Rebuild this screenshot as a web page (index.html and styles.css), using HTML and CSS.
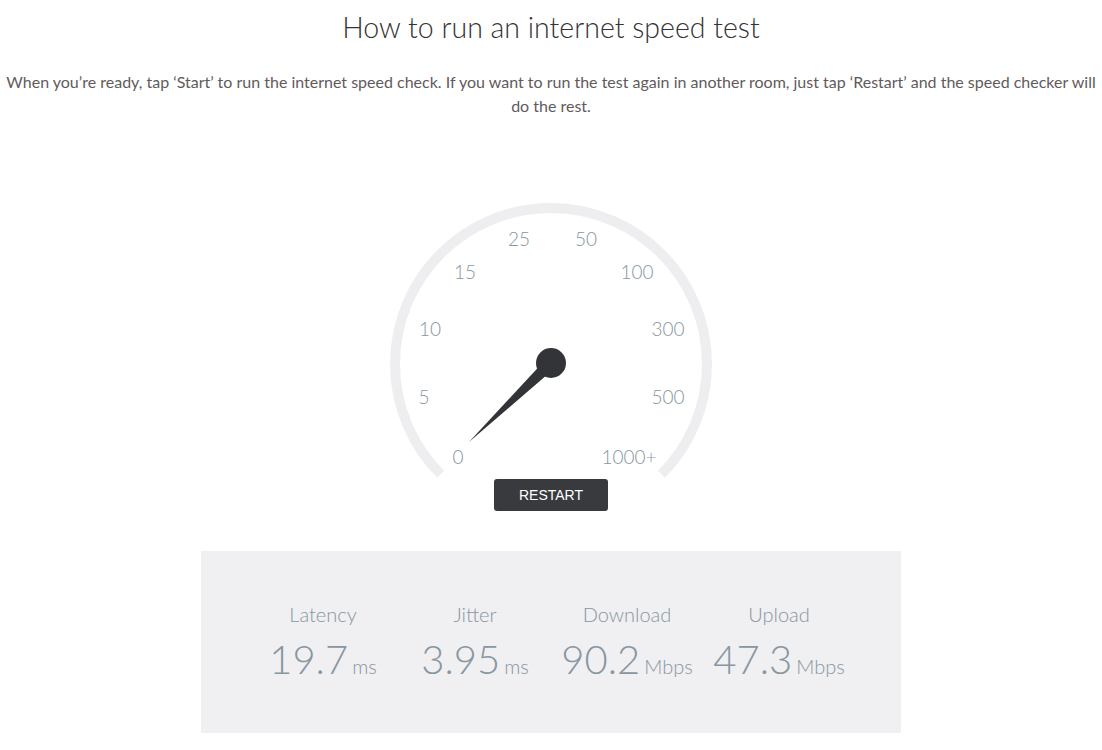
FILE: index.html
```html
<!DOCTYPE html>
<html>
<head>
<meta charset="utf-8">
<link rel="stylesheet" href="styles.css">
</head>
<body>
<section class="intro">
  <h1 class="title">How to run an internet speed test</h1>
  <p class="lead">When you’re ready, tap ‘Start’ to run the internet speed check. If you want to run the test again in another room, just tap ‘Restart’ and the speed checker will do the rest.</p>
</section>
<section class="gauge-wrap">
  <svg class="gauge" width="340" height="284" viewBox="0 0 340 284">
    <path d="M 59.7 279.3 A 156 156 0 1 1 280.3 279.3" fill="none" stroke="#eeedf0" stroke-width="10"/>
    <g class="ticks" text-anchor="middle" dominant-baseline="central">
      <text x="77" y="261">0</text>
      <text x="43" y="201">5</text>
      <text x="49" y="133">10</text>
      <text x="84" y="76">15</text>
      <text x="138" y="43">25</text>
      <text x="205" y="43">50</text>
      <text x="256" y="76">100</text>
      <text x="287" y="133">300</text>
      <text x="287" y="201">500</text>
      <text x="248" y="261">1000+</text>
    </g>
    <polygon points="174.5,172.6 165.5,163.4 88,247" fill="#333438"/>
    <circle cx="170" cy="168" r="15" fill="#333438"/>
  </svg>
  <button class="restart">RESTART</button>
</section>
<section class="results">
  <div class="stat">
    <div class="stat-label">Latency</div>
    <div class="stat-value">19.7<span class="unit">ms</span></div>
  </div>
  <div class="stat">
    <div class="stat-label">Jitter</div>
    <div class="stat-value">3.95<span class="unit">ms</span></div>
  </div>
  <div class="stat">
    <div class="stat-label">Download</div>
    <div class="stat-value">90.2<span class="unit">Mbps</span></div>
  </div>
  <div class="stat">
    <div class="stat-label">Upload</div>
    <div class="stat-value">47.3<span class="unit">Mbps</span></div>
  </div>
</section>
</body>
</html>
```

FILE: styles.css
```css
html, body {
  margin: 0;
  padding: 0;
  background: #ffffff;
}
body {
  font-family: Lato, "Liberation Sans", sans-serif;
  width: 1102px;
}
.intro {
  text-align: center;
  padding: 0 4px;
}
.title {
  margin: 0;
  padding-top: 10px;
  font-family: Lato, sans-serif;
  font-weight: 300;
  font-size: 28.5px;
  line-height: 34px;
  color: #333333;
}
.lead {
  margin: 26px 0 0;
  font-family: Lato, sans-serif;
  font-weight: 400;
  font-size: 16px;
  line-height: 24px;
  color: #5f5b5c;
}
.gauge-wrap {
  display: flex;
  flex-direction: column;
  align-items: center;
  margin-top: 77px;
}
.gauge {
  display: block;
  overflow: visible;
}
.ticks text {
  font-family: Lato, sans-serif;
  font-weight: 300;
  font-size: 19px;
  fill: #8796a1;
}
.restart {
  width: 114px;
  height: 32px;
  border: none;
  border-radius: 3px;
  background: #393a3e;
  color: #ffffff;
  font-family: "Liberation Sans", Arial, sans-serif;
  font-size: 14px;
  padding: 0;
  margin-top: 0;
}
.results {
  width: 700px;
  height: 182px;
  margin: 40px auto 0;
  background: #f0eff1;
  display: flex;
  justify-content: center;
  box-sizing: border-box;
  padding-top: 50px;
}
.stat {
  width: 152px;
  text-align: center;
  color: #8796a1;
}
.stat-label {
  font-weight: 300;
  font-size: 20px;
  line-height: 26px;
}
.stat-value {
  font-weight: 300;
  font-size: 40px;
  line-height: 48px;
  margin-top: 8px;
  white-space: nowrap;
}
.unit {
  font-size: 20px;
  margin-left: 4px;
}
```
